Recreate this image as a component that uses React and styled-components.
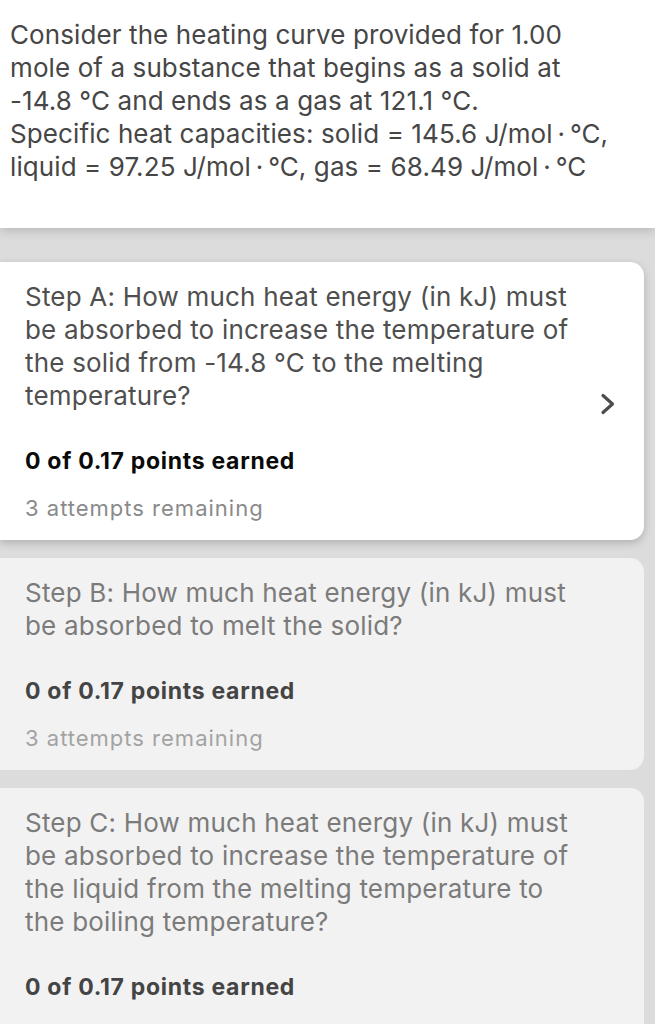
import styled, { createGlobalStyle } from "styled-components"

const GlobalStyle = createGlobalStyle`
    html, body {
        margin: 0;
        padding: 0;
        background: #dcdcdc;
    }
    body {
        font-family: Inter, "Liberation Sans", Arial, sans-serif;
    }
`

// lines are broken by hand so they wrap as in the app
const steps = [
    {
        id: "A",
        question: [
            "Step A: How much heat energy (in kJ) must",
            "be absorbed to increase the temperature of",
            "the solid from -14.8 °C to the melting",
            "temperature?",
        ],
        points: "0 of 0.17 points earned",
        attempts: "3 attempts remaining",
        active: true,
    },
    {
        id: "B",
        question: [
            "Step B: How much heat energy (in kJ) must",
            "be absorbed to melt the solid?",
        ],
        points: "0 of 0.17 points earned",
        attempts: "3 attempts remaining",
    },
    {
        id: "C",
        question: [
            "Step C: How much heat energy (in kJ) must",
            "be absorbed to increase the temperature of",
            "the liquid from the melting temperature to",
            "the boiling temperature?",
        ],
        points: "0 of 0.17 points earned",
        attempts: "3 attempts remaining",
    },
]

function Chevron() {
    return (
        <svg width="18" height="24" viewBox="0 0 18 24" fill="none">
            <path d="M4 3.5 L13.5 12 L4 20.5" stroke="#4d4d4d" strokeWidth="3.2" strokeLinecap="round" strokeLinejoin="round" />
        </svg>
    )
}

export default function App() {
    return (
        <>
            <GlobalStyle />
            <StyledPage>
                <StyledHeader>
                    <StyledIntro>
                        <span>Consider the heating curve provided for 1.00</span>
                        <span>mole of a substance that begins as a solid at</span>
                        <span>-14.8 °C and ends as a gas at 121.1 °C.</span>
                        <span>Specific heat capacities: solid = 145.6 J/mol{"\u2009·\u2009"}°C,</span>
                        <span>liquid = 97.25 J/mol{"\u2009·\u2009"}°C, gas = 68.49 J/mol{"\u2009·\u2009"}°C</span>
                    </StyledIntro>
                </StyledHeader>
                <StyledStepList>
                    {steps.map(step => (
                        <StyledCard key={step.id} $active={step.active}>
                            <StyledBody>
                                <StyledQuestion $active={step.active}>
                                    {step.question.map(line => <span key={line}>{line}</span>)}
                                </StyledQuestion>
                                <StyledPoints $active={step.active}>{step.points}</StyledPoints>
                                <StyledAttempts $active={step.active}>{step.attempts}</StyledAttempts>
                            </StyledBody>
                            {step.active && (
                                <StyledArrow>
                                    <Chevron />
                                </StyledArrow>
                            )}
                        </StyledCard>
                    ))}
                </StyledStepList>
            </StyledPage>
        </>
    )
}

const StyledPage = styled.div`
    width: 655px;
    min-height: 1024px;
    background: #dcdcdc;
    overflow: hidden;
`

const StyledHeader = styled.div`
    background: #ffffff;
    padding: 18px 0 45px 10px;
    box-shadow: 0 3px 10px rgba(0, 0, 0, 0.16);
    position: relative;
    z-index: 1;
`

const StyledIntro = styled.p`
    margin: 0;
    display: flex;
    flex-direction: column;
    font-size: 26px;
    line-height: 33px;
    letter-spacing: 0.1px;
    color: #464646;
    white-space: nowrap;
`

const StyledStepList = styled.div`
    display: flex;
    flex-direction: column;
    gap: 18px;
    padding: 34px 11px 20px 0;
`

const StyledCard = styled.div`
    display: flex;
    align-items: center;
    background: ${props => props.$active ? "#ffffff" : "#f2f2f2"};
    border-radius: 0 14px 14px 0;
    padding: 18px 27px 15px 25px;
    box-shadow: ${props => props.$active ? "0 3px 9px rgba(0, 0, 0, 0.2)" : "none"};
`

const StyledBody = styled.div`
    flex: 1;
`

const StyledQuestion = styled.div`
    display: flex;
    flex-direction: column;
    font-size: 26px;
    line-height: 33px;
    letter-spacing: 0.2px;
    white-space: nowrap;
    color: ${props => props.$active ? "#4f4f4f" : "#7b7b7b"};
`

const StyledPoints = styled.div`
    margin-top: 33px;
    font-size: 23px;
    line-height: 33px;
    font-weight: 700;
    letter-spacing: 0.7px;
    white-space: nowrap;
    color: ${props => props.$active ? "#0a0a0a" : "#444444"};
`

const StyledAttempts = styled.div`
    margin-top: 14px;
    font-size: 22px;
    line-height: 33px;
    letter-spacing: 1px;
    white-space: nowrap;
    color: ${props => props.$active ? "#8a8a8a" : "#a3a3a3"};
`

const StyledArrow = styled.div`
    display: flex;
    align-items: center;
    margin-top: 2px;
`
